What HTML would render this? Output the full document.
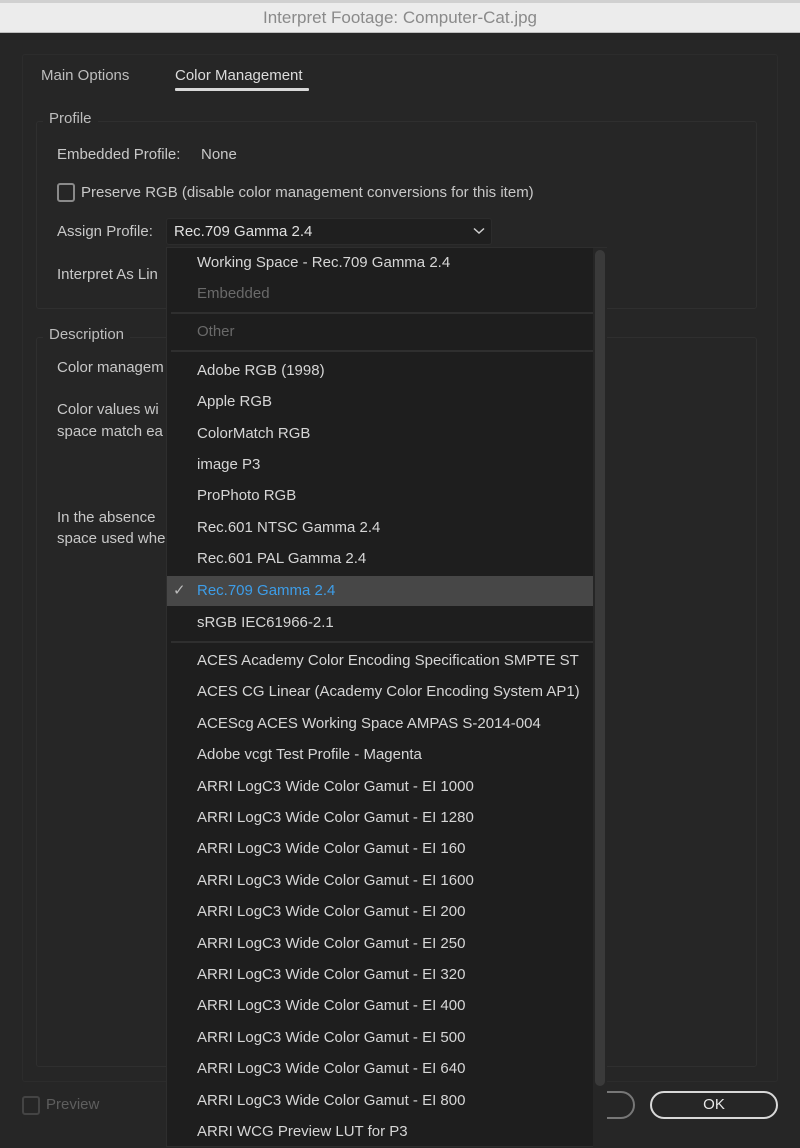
<!DOCTYPE html>
<html><head><meta charset="utf-8"><style>
*{margin:0;padding:0;box-sizing:border-box}
body{width:800px;height:1139px;background:#262626;font-family:"Liberation Sans",sans-serif;font-size:15px;color:#c8c8c8;position:relative;overflow:hidden}
.a{position:absolute;white-space:nowrap;line-height:20px}
#title{position:absolute;left:0;top:0;width:800px;height:33px;background:#ececec;border-bottom:1px solid #bdbdbd;color:#8a8a8a;font-size:17px;text-align:center;line-height:36px}
#top{position:absolute;left:0;top:0;width:800px;height:3px;background:#d0d0d0}
.panel{position:absolute;left:22px;top:54px;width:756px;height:1028px;border:1px solid #2c2c2c;background:#262626;border-radius:3px}
.fs{position:absolute;border:1px solid #2f2f2f;border-radius:3px}
.leg{position:absolute;background:#262626;padding:0 6px;color:#bdbdbd}
#menu{position:absolute;left:166px;top:247px;width:441px;height:900px;background:#1e1e1e;border:1px solid #2e2e2e}
.it{position:absolute;left:30px;line-height:20px;white-space:nowrap;color:#d6d6d6}
.dis{color:#6a6a6a}
.sep{position:absolute;left:4px;width:422px;height:2px;background:#2f2f2f}
</style></head><body>
<div id="title">Interpret Footage: Computer-Cat.jpg</div><div id="top"></div>
<div class="panel"></div>
<div class="a" style="left:41px;top:66px;color:#bdbdbd">Main Options</div>
<div class="a" style="left:175px;top:66px;color:#dcdcdc">Color Management</div>
<div style="position:absolute;left:175px;top:88px;width:134px;height:3px;background:#d8d8d8;border-radius:1px"></div>
<div class="fs" style="left:36px;top:121px;width:721px;height:188px"></div>
<div class="leg" style="left:43px;top:110px">Profile</div>
<div class="a" style="left:57px;top:145px">Embedded Profile:</div>
<div class="a" style="left:201px;top:145px">None</div>
<div style="position:absolute;left:57px;top:183px;width:18px;height:19px;border:2px solid #8a8a8a;border-radius:3px"></div>
<div class="a" style="left:81px;top:183px">Preserve RGB (disable color management conversions for this item)</div>
<div class="a" style="left:57px;top:222px">Assign Profile:</div>
<div style="position:absolute;left:166px;top:218px;width:326px;height:27px;background:#1f1f1f;border:1px solid #2c2c2c;border-radius:3px"></div>
<div class="a" style="left:174px;top:222px;color:#e0e0e0">Rec.709 Gamma 2.4</div>
<svg style="position:absolute;left:473px;top:227px" width="12" height="8"><path d="M1 1.5 L6 6 L11 1.5" stroke="#cfcfcf" stroke-width="1.5" fill="none"/></svg>
<div class="a" style="left:57px;top:265px">Interpret As Lin</div>
<div class="fs" style="left:36px;top:337px;width:721px;height:730px"></div>
<div class="leg" style="left:43px;top:326px">Description</div>
<div class="a" style="left:57px;top:358px">Color managem</div>
<div class="a" style="left:57px;top:400px">Color values wi</div>
<div class="a" style="left:57px;top:422px">space match ea</div>
<div class="a" style="left:57px;top:508px">In the absence </div>
<div class="a" style="left:57px;top:529px">space used whe</div>
<div style="position:absolute;left:22px;top:1096px;width:18px;height:19px;border:2px solid #444;border-radius:3px"></div>
<div class="a" style="left:46px;top:1095px;color:#5e5e5e">Preview</div>
<div style="position:absolute;left:560px;top:1091px;width:75px;height:28px;border:2px solid #777;border-radius:14px"></div>
<div style="position:absolute;left:650px;top:1091px;width:128px;height:28px;border:2px solid #d8d8d8;border-radius:14px;text-align:center;line-height:24px;color:#e8e8e8">OK</div>
<div id="menu">
<div style="position:absolute;left:426px;top:0;width:14px;height:900px;background:#262626"></div>
<div style="position:absolute;left:428px;top:2px;width:10px;height:836px;background:#3a3a3a;border-radius:5px"></div>
<div class="it" style="top:5px">Working Space - Rec.709 Gamma 2.4</div>
<div class="it dis" style="top:36px">Embedded</div>
<div class="sep" style="top:64px"></div>
<div class="it dis" style="top:74px">Other</div>
<div class="sep" style="top:102px"></div>
<div class="it" style="top:113px">Adobe RGB (1998)</div>
<div class="it" style="top:144px">Apple RGB</div>
<div class="it" style="top:176px">ColorMatch RGB</div>
<div class="it" style="top:207px">image P3</div>
<div class="it" style="top:238px">ProPhoto RGB</div>
<div class="it" style="top:270px">Rec.601 NTSC Gamma 2.4</div>
<div class="it" style="top:301px">Rec.601 PAL Gamma 2.4</div>
<div style="position:absolute;left:0;top:328px;width:426px;height:30px;background:#474747"></div>
<div class="it" style="left:6px;top:333px;color:#bbb">✓</div>
<div class="it" style="top:333px;color:#3d9de8">Rec.709 Gamma 2.4</div>
<div class="it" style="top:365px">sRGB IEC61966-2.1</div>
<div class="sep" style="top:393px"></div>
<div class="it" style="top:403px">ACES Academy Color Encoding Specification SMPTE ST</div>
<div class="it" style="top:434px">ACES CG Linear (Academy Color Encoding System AP1)</div>
<div class="it" style="top:466px">ACEScg ACES Working Space AMPAS S-2014-004</div>
<div class="it" style="top:497px">Adobe vcgt Test Profile - Magenta</div>
<div class="it" style="top:529px">ARRI LogC3 Wide Color Gamut - EI 1000</div>
<div class="it" style="top:560px">ARRI LogC3 Wide Color Gamut - EI 1280</div>
<div class="it" style="top:591px">ARRI LogC3 Wide Color Gamut - EI 160</div>
<div class="it" style="top:623px">ARRI LogC3 Wide Color Gamut - EI 1600</div>
<div class="it" style="top:654px">ARRI LogC3 Wide Color Gamut - EI 200</div>
<div class="it" style="top:686px">ARRI LogC3 Wide Color Gamut - EI 250</div>
<div class="it" style="top:717px">ARRI LogC3 Wide Color Gamut - EI 320</div>
<div class="it" style="top:748px">ARRI LogC3 Wide Color Gamut - EI 400</div>
<div class="it" style="top:780px">ARRI LogC3 Wide Color Gamut - EI 500</div>
<div class="it" style="top:811px">ARRI LogC3 Wide Color Gamut - EI 640</div>
<div class="it" style="top:843px">ARRI LogC3 Wide Color Gamut - EI 800</div>
<div class="it" style="top:874px">ARRI WCG Preview LUT for P3</div>
</div>
</body></html>
